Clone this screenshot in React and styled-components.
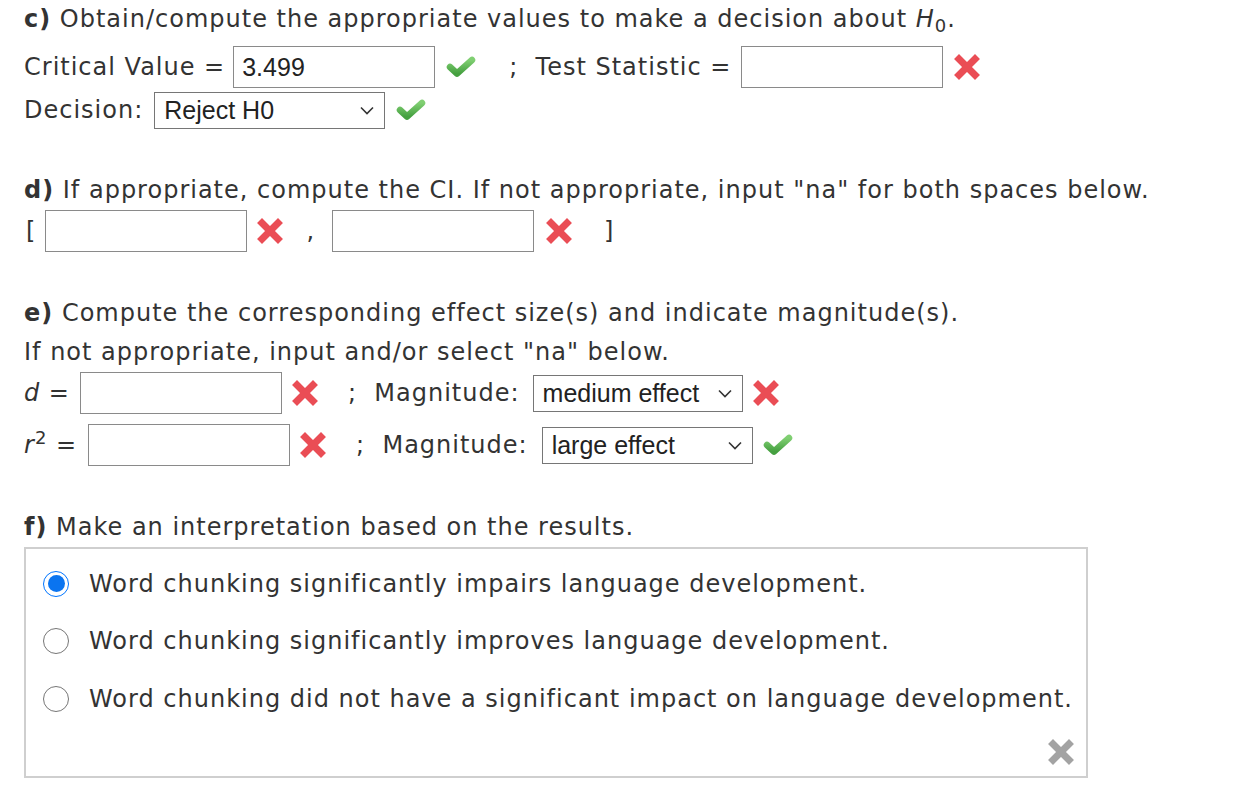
import React from 'react';
import styled, { createGlobalStyle } from 'styled-components';

const Global = createGlobalStyle`
  body {
    margin: 0;
    background: #fff;
    font-family: "DejaVu Sans", Verdana, sans-serif;
    font-size: 24px;
    letter-spacing: 1px;
    color: #333;
  }
`;

const Page = styled.div`
  padding: 0 0 0 24px;
  width: 1200px;
`;

const Heading = styled.div`
  height: 38px;
  line-height: 38px;
  white-space: nowrap;
  margin-top: ${p => p.$top || 0}px;
  b { font-weight: bold; }
`;

const Row = styled.div`
  display: flex;
  align-items: center;
  height: ${p => p.$h || 44}px;
  margin-top: ${p => p.$top || 0}px;
  white-space: nowrap;
`;

const Label = styled.span`
  margin-right: ${p => p.$mr ?? 12}px;
  margin-left: ${p => p.$ml || 0}px;
`;

const TextBox = styled.div`
  width: 202px;
  height: 42px;
  box-sizing: border-box;
  border: 1px solid #8a8a8a;
  font-family: "Liberation Sans", Arial, sans-serif;
  font-size: 25px;
  letter-spacing: 0;
  color: #222;
  padding-left: 8px;
  display: flex;
  align-items: center;
`;

const Select = styled.div`
  width: ${p => p.$w || 230}px;
  height: 37px;
  box-sizing: border-box;
  border: 1px solid #767676;
  font-family: "Liberation Sans", Arial, sans-serif;
  font-size: 25px;
  letter-spacing: 0;
  color: #222;
  padding: 0 10px 0 9px;
  display: flex;
  align-items: center;
  justify-content: space-between;
`;

const Mark = styled.span`
  display: inline-flex;
  margin-left: ${p => p.$ml ?? 11}px;
  margin-right: ${p => p.$mr || 0}px;
`;

const Ital = styled.i`
  font-style: italic;
`;

const Box = styled.div`
  margin-top: 1px;
  border: 2px solid #cfcfcf;
  width: 1064px;
  height: 231px;
  box-sizing: border-box;
  padding: 6px 0 0 17px;
  display: flex;
  flex-direction: column;
`;

const Option = styled.div`
  display: flex;
  align-items: center;
  height: 57.5px;
  white-space: nowrap;
`;

const Radio = styled.span`
  width: 26px;
  height: 26px;
  box-sizing: border-box;
  border-radius: 50%;
  border: 1px solid ${p => (p.$on ? '#0075ff' : '#767676')};
  display: inline-flex;
  align-items: center;
  justify-content: center;
  margin-right: 20px;
  &::after {
    content: '';
    display: ${p => (p.$on ? 'block' : 'none')};
    width: 17px;
    height: 17px;
    border-radius: 50%;
    background: #0a74f0;
  }
`;

const BoxFoot = styled.div`
  display: flex;
  justify-content: flex-end;
  padding-right: 11px;
  margin-top: 10px;
`;

const Chevron = () => (
  <svg width="14" height="9" viewBox="0 0 14 9">
    <path d="M1 1.5 L7 7.5 L13 1.5" fill="none" stroke="#333" strokeWidth="1.6" />
  </svg>
);

const Check = () => (
  <svg width="30" height="22" viewBox="0 0 30 22">
    <defs>
      <linearGradient id="gck" x1="0" y1="0" x2="0" y2="1">
        <stop offset="0" stopColor="#80cf72" />
        <stop offset="1" stopColor="#45a040" />
      </linearGradient>
    </defs>
    <polyline points="4,11 11,17.5 26,4" fill="none" stroke="url(#gck)" strokeWidth="6.5" strokeLinecap="round" strokeLinejoin="round" />
  </svg>
);

const Cross = ({ gray }) => (
  <svg width="28" height="28" viewBox="0 0 28 28">
    <g stroke={gray ? '#a3a3a3' : '#ea4d55'} strokeWidth="7" strokeLinecap="square">
      <line x1="6" y1="6" x2="22" y2="22" />
      <line x1="22" y1="6" x2="6" y2="22" />
    </g>
  </svg>
);

export default function App() {
  return (
    <Page>
      <Global />
      <Heading>
        <b>c)</b> Obtain/compute the appropriate values to make a decision about <Ital>H</Ital><sub style={{ fontSize: '0.75em', verticalAlign: '-0.25em' }}>0</sub>.
      </Heading>
      <Row $h={46} $top={6}>
        <Label $mr={8}>Critical Value =</Label>
        <TextBox>3.499</TextBox>
        <Mark $ml={11}><Check /></Mark>
        <Label $ml={33} $mr={10}>;&nbsp; Test Statistic =</Label>
        <TextBox />
        <Mark $ml={10}><Cross /></Mark>
      </Row>
      <Row $h={40}>
        <Label $mr={11}>Decision:</Label>
        <Select $w={231}>Reject H0<Chevron /></Select>
        <Mark $ml={11}><Check /></Mark>
      </Row>

      <Heading $top={41}>
        <b>d)</b> If appropriate, compute the CI. If not appropriate, input "na" for both spaces below.
      </Heading>
      <Row $h={44}>
        <Label $ml={2} $mr={9}>[</Label>
        <TextBox />
        <Mark $ml={9}><Cross /></Mark>
        <Label $ml={22} $mr={17}>,</Label>
        <TextBox />
        <Mark $ml={11}><Cross /></Mark>
        <Label $ml={31}>]</Label>
      </Row>

      <Heading $top={41}>
        <b>e)</b> Compute the corresponding effect size(s) and indicate magnitude(s).
      </Heading>
      <Heading $top={1}>If not appropriate, input and/or select "na" below.</Heading>
      <Row $h={44}>
        <Label $mr={10}><Ital>d</Ital> =</Label>
        <TextBox />
        <Mark $ml={9}><Cross /></Mark>
        <Label $ml={29} $mr={13}>;&nbsp; Magnitude:</Label>
        <Select $w={210}>medium effect<Chevron /></Select>
        <Mark $ml={9}><Cross /></Mark>
      </Row>
      <Row $h={44} $top={8}>
        <Label $mr={11}><Ital>r</Ital><sup style={{ fontSize: '0.75em', verticalAlign: '0.5em', lineHeight: 0 }}>2</sup> =</Label>
        <TextBox />
        <Mark $ml={9}><Cross /></Mark>
        <Label $ml={29} $mr={14}>;&nbsp; Magnitude:</Label>
        <Select $w={211}>large effect<Chevron /></Select>
        <Mark $ml={10}><Check /></Mark>
      </Row>

      <Heading $top={41}>
        <b>f)</b> Make an interpretation based on the results.
      </Heading>
      <Box>
        <Option><Radio $on />Word chunking significantly impairs language development.</Option>
        <Option><Radio />Word chunking significantly improves language development.</Option>
        <Option><Radio />Word chunking did not have a significant impact on language development.</Option>
        <BoxFoot><Cross gray /></BoxFoot>
      </Box>
    </Page>
  );
}
